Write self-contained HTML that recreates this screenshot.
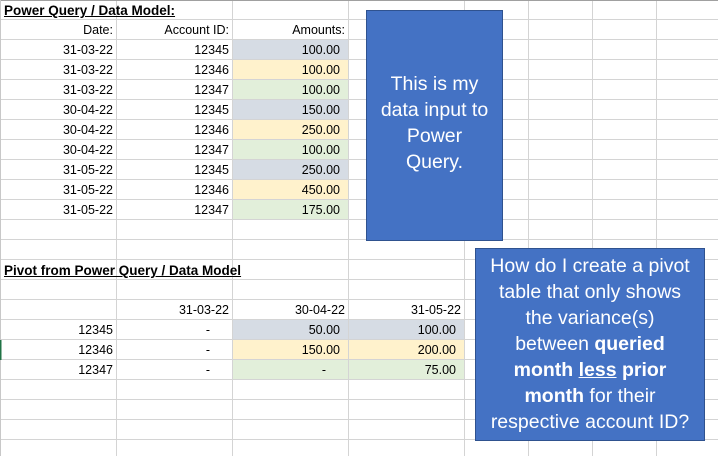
<!DOCTYPE html>
<html><head><style>
body{margin:0;width:718px;height:456px;overflow:hidden;background:#fff;font-family:"Liberation Sans",sans-serif;position:relative}
.c{position:absolute;height:20px;line-height:21px;font-size:12.5px;color:#000;text-align:right;box-sizing:border-box;padding-right:3px}
.f{position:absolute;height:19px}
.t{position:absolute;font-size:13.5px;font-weight:bold;text-decoration:underline;line-height:20px;left:4px}
.box{position:absolute;background:#4472c4;border:1px solid #2f528f;color:#fff;text-align:center;font-size:19.5px;line-height:26px;box-sizing:border-box}
</style></head><body>
<div class="f" style="left:232px;top:40px;width:116px;background:#d6dce4"></div>
<div class="f" style="left:232px;top:60px;width:116px;background:#fff2cc"></div>
<div class="f" style="left:232px;top:80px;width:116px;background:#e2efda"></div>
<div class="f" style="left:232px;top:100px;width:116px;background:#d6dce4"></div>
<div class="f" style="left:232px;top:120px;width:116px;background:#fff2cc"></div>
<div class="f" style="left:232px;top:140px;width:116px;background:#e2efda"></div>
<div class="f" style="left:232px;top:160px;width:116px;background:#d6dce4"></div>
<div class="f" style="left:232px;top:180px;width:116px;background:#fff2cc"></div>
<div class="f" style="left:232px;top:200px;width:116px;background:#e2efda"></div>
<div class="f" style="left:232px;top:320px;width:232px;background:#d6dce4"></div>
<div class="f" style="left:232px;top:340px;width:232px;background:#fff2cc"></div>
<div class="f" style="left:232px;top:360px;width:232px;background:#e2efda"></div>
<svg style="position:absolute;left:0;top:0" width="718" height="456">
<g stroke="#d4d4d4" stroke-width="1">
<line x1="116.5" y1="0" x2="116.5" y2="456"/><line x1="232.5" y1="0" x2="232.5" y2="456"/><line x1="348.5" y1="0" x2="348.5" y2="456"/><line x1="464.5" y1="0" x2="464.5" y2="456"/><line x1="528.5" y1="0" x2="528.5" y2="456"/><line x1="592.5" y1="0" x2="592.5" y2="456"/><line x1="656.5" y1="0" x2="656.5" y2="456"/>
<line x1="0" y1="19.5" x2="718" y2="19.5"/><line x1="0" y1="39.5" x2="718" y2="39.5"/><line x1="0" y1="59.5" x2="718" y2="59.5"/><line x1="0" y1="79.5" x2="718" y2="79.5"/><line x1="0" y1="99.5" x2="718" y2="99.5"/><line x1="0" y1="119.5" x2="718" y2="119.5"/><line x1="0" y1="139.5" x2="718" y2="139.5"/><line x1="0" y1="159.5" x2="718" y2="159.5"/><line x1="0" y1="179.5" x2="718" y2="179.5"/><line x1="0" y1="199.5" x2="718" y2="199.5"/><line x1="0" y1="219.5" x2="718" y2="219.5"/><line x1="0" y1="239.5" x2="718" y2="239.5"/><line x1="0" y1="259.5" x2="718" y2="259.5"/><line x1="0" y1="279.5" x2="718" y2="279.5"/><line x1="0" y1="299.5" x2="718" y2="299.5"/><line x1="0" y1="319.5" x2="718" y2="319.5"/><line x1="0" y1="339.5" x2="718" y2="339.5"/><line x1="0" y1="359.5" x2="718" y2="359.5"/><line x1="0" y1="379.5" x2="718" y2="379.5"/><line x1="0" y1="399.5" x2="718" y2="399.5"/><line x1="0" y1="419.5" x2="718" y2="419.5"/><line x1="0" y1="439.5" x2="718" y2="439.5"/>
</g>
<line x1="0" y1="0.5" x2="718" y2="0.5" stroke="#a0a0a0"/>
<line x1="0.5" y1="0" x2="0.5" y2="456" stroke="#c8c8c8"/>
<line x1="0.5" y1="340" x2="0.5" y2="360" stroke="#217346" stroke-width="2"/>
</svg>
<div class="t" style="top:1px">Power Query / Data Model:</div>
<div class="c" style="left:0;top:20px;width:116px">Date:</div>
<div class="c" style="left:116px;top:20px;width:116px">Account ID:</div>
<div class="c" style="left:232px;top:20px;width:116px">Amounts:</div>

<div class="c" style="left:0;top:40px;width:116px">31-03-22</div><div class="c" style="left:116px;top:40px;width:116px">12345</div><div class="c" style="left:232px;top:40px;width:116px;padding-right:8px">100.00</div>
<div class="c" style="left:0;top:60px;width:116px">31-03-22</div><div class="c" style="left:116px;top:60px;width:116px">12346</div><div class="c" style="left:232px;top:60px;width:116px;padding-right:8px">100.00</div>
<div class="c" style="left:0;top:80px;width:116px">31-03-22</div><div class="c" style="left:116px;top:80px;width:116px">12347</div><div class="c" style="left:232px;top:80px;width:116px;padding-right:8px">100.00</div>
<div class="c" style="left:0;top:100px;width:116px">30-04-22</div><div class="c" style="left:116px;top:100px;width:116px">12345</div><div class="c" style="left:232px;top:100px;width:116px;padding-right:8px">150.00</div>
<div class="c" style="left:0;top:120px;width:116px">30-04-22</div><div class="c" style="left:116px;top:120px;width:116px">12346</div><div class="c" style="left:232px;top:120px;width:116px;padding-right:8px">250.00</div>
<div class="c" style="left:0;top:140px;width:116px">30-04-22</div><div class="c" style="left:116px;top:140px;width:116px">12347</div><div class="c" style="left:232px;top:140px;width:116px;padding-right:8px">100.00</div>
<div class="c" style="left:0;top:160px;width:116px">31-05-22</div><div class="c" style="left:116px;top:160px;width:116px">12345</div><div class="c" style="left:232px;top:160px;width:116px;padding-right:8px">250.00</div>
<div class="c" style="left:0;top:180px;width:116px">31-05-22</div><div class="c" style="left:116px;top:180px;width:116px">12346</div><div class="c" style="left:232px;top:180px;width:116px;padding-right:8px">450.00</div>
<div class="c" style="left:0;top:200px;width:116px">31-05-22</div><div class="c" style="left:116px;top:200px;width:116px">12347</div><div class="c" style="left:232px;top:200px;width:116px;padding-right:8px">175.00</div>

<div class="t" style="top:261px">Pivot from Power Query / Data Model</div>
<div class="c" style="left:116px;top:300px;width:116px">31-03-22</div>
<div class="c" style="left:232px;top:300px;width:116px">30-04-22</div>
<div class="c" style="left:348px;top:300px;width:116px">31-05-22</div>
<div class="c" style="left:0;top:320px;width:116px">12345</div><div class="c" style="left:116px;top:320px;width:116px;padding-right:22px">-</div><div class="c" style="left:232px;top:320px;width:116px;padding-right:8px">50.00</div><div class="c" style="left:348px;top:320px;width:116px;padding-right:8px">100.00</div>
<div class="c" style="left:0;top:340px;width:116px">12346</div><div class="c" style="left:116px;top:340px;width:116px;padding-right:22px">-</div><div class="c" style="left:232px;top:340px;width:116px;padding-right:8px">150.00</div><div class="c" style="left:348px;top:340px;width:116px;padding-right:8px">200.00</div>
<div class="c" style="left:0;top:360px;width:116px">12347</div><div class="c" style="left:116px;top:360px;width:116px;padding-right:22px">-</div><div class="c" style="left:232px;top:360px;width:116px;padding-right:22px">-</div><div class="c" style="left:348px;top:360px;width:116px;padding-right:8px">75.00</div>

<div class="box" style="left:366px;top:10px;width:137px;height:231px;padding-top:60px">This is my<br>data input to<br>Power<br>Query.</div>
<div class="box" style="left:475px;top:248px;width:230px;height:193px;padding-top:4px">How do I create a pivot<br>table that only shows<br>the variance(s)<br>between <b>queried</b><br><b>month <u>less</u> prior</b><br><b>month</b> for their<br>respective account ID?</div>
</body></html>
